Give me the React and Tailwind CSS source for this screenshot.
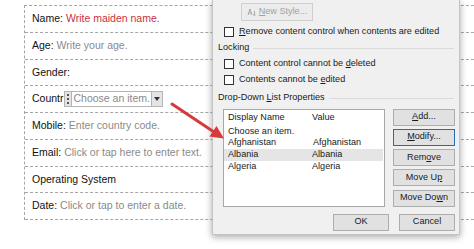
const rows = [
  { label: 'Name:', hint: 'Write maiden name.', red: true },
  { label: 'Age:', hint: 'Write your age.' },
  { label: 'Gender:', hint: '' },
  { label: 'Countr', combo: true },
  { label: 'Mobile:', hint: 'Enter country code.' },
  { label: 'Email:', hint: 'Click or tap here to enter text.' },
  { label: 'Operating System', hint: '' },
  { label: 'Date:', hint: 'Click or tap to enter a date.' },
]

const items = [
  { name: 'Choose an item.', value: '' },
  { name: 'Afghanistan', value: 'Afghanistan', shift: true },
  { name: 'Albania', value: 'Albania', selected: true },
  { name: 'Algeria', value: 'Algeria' },
]

function Check({ children }) {
  return (
    <div className="flex items-center h-[15.5px] pl-[6px] gap-[5px]">
      <span className="w-[10px] h-[10px] shrink-0 bg-white border border-[#333]" />
      <span>{children}</span>
    </div>
  )
}

function Group({ title }) {
  return (
    <div className="flex items-center gap-[4px] h-[17px]">
      <span>{title}</span>
      <span className="flex-1 h-px bg-[#dadada] mr-[5px]" />
    </div>
  )
}

function Btn({ children, focus, w = 'w-[62px]' }) {
  return (
    <div
      className={`${w} h-[17px] flex items-center justify-center bg-[#e1e1e1] border ${
        focus ? 'border-[#2b67b8]' : 'border-[#adadad]'
      }`}
    >
      {children}
    </div>
  )
}

export default function App() {
  return (
    <div
      className="relative w-[474px] h-[249px] overflow-hidden bg-white whitespace-nowrap"
      style={{ fontFamily: '"Liberation Sans", Arial, sans-serif' }}
    >
      {/* document table */}
      <div className="pt-[5px] pl-[24px]">
        <div className="w-[480px] border-t border-l border-dashed border-[#a5a5a5] text-[10.5px] text-[#111]">
          {rows.map((r) => (
            <div key={r.label} className="h-[26.75px] flex items-center pl-[7px] border-b border-dashed border-[#a5a5a5]">
              <span>{r.label}</span>
              {r.combo ? (
                <div className="flex items-center h-[16px]">
                  <span className="w-[8px] h-[16px] bg-[#e4e4e4] border border-[#b5b5b5] flex flex-col items-center justify-center gap-[2px]">
                    <span className="w-[2px] h-[2px] bg-[#555]" />
                    <span className="w-[2px] h-[2px] bg-[#555]" />
                    <span className="w-[2px] h-[2px] bg-[#555]" />
                  </span>
                  <span className="h-[16px] w-[79px] border-y border-[#b5b5b5] flex items-center pl-[2px] text-[#8a8a8a]">
                    Choose an item.
                  </span>
                  <span className="w-[12px] h-[16px] bg-[#e4e4e4] border border-[#b5b5b5] flex items-center justify-center">
                    <svg width="6" height="4" viewBox="0 0 6 4"><path d="M0 0h6L3 4z" fill="#333" /></svg>
                  </span>
                </div>
              ) : (
                r.hint && (
                  <span className={`ml-[3px] ${r.red ? 'text-[#c8333b]' : 'text-[#8a8a8a]'}`}>{r.hint}</span>
                )
              )}
            </div>
          ))}
        </div>
      </div>

      {/* dialog */}
      <div className="absolute left-[212px] top-0 w-[248px] h-[235px] bg-[#f0f0f0] border-x border-b border-[#c4c4c4] shadow-[0_2px_7px_rgba(0,0,0,0.35)] pl-[5px] pt-[3px] text-[9.1px] text-[#1a1a1a]">
        <div className="pl-[23px] h-[18px]">
          <div className="w-[72px] h-[18px] border border-[#cfcfcf] bg-[#ececec] flex items-center justify-center gap-[3px] text-[#a2a2a2]">
            <svg width="9" height="8" viewBox="0 0 9 8" fill="none" stroke="#a8a8a8" strokeWidth="1">
              <path d="M1 7L3 1l2 6M1.8 5h2.6M6 7h2.5M7.5 3v4" />
            </svg>
            <span><u>N</u>ew Style...</span>
          </div>
        </div>
        <div className="h-[3px]" />
        <Check>
          <u>R</u>emove content control when contents are edited
        </Check>
        <Group title="Locking" />
        <Check>
          Content control cannot be <u>d</u>eleted
        </Check>
        <Check>
          Contents cannot be <u>e</u>dited
        </Check>
        <div className="h-[2px]" />
        <Group title={<>Drop-Down <u>L</u>ist Properties</>} />
        <div className="h-[2px]" />
        <div className="flex pl-[5px] gap-[8px]">
          <div className="w-[162px] h-[98px] bg-white border border-[#a8a8a8]">
            <div className="flex h-[16px] items-center pl-[4px]">
              <span className="w-[84px]">Display Name</span>
              <span>Value</span>
            </div>
            {items.map((it) => (
              <div
                key={it.name}
                className={`flex h-[11.7px] items-center pl-[4px] mr-[1px] ${it.selected ? 'bg-[#e5e5e5]' : ''}`}
              >
                <span className="w-[84px]">{it.name}</span>
                <span className={it.shift ? 'pl-[1px]' : ''}>{it.value}</span>
              </div>
            ))}
          </div>
          <div className="flex flex-col gap-[3.3px]">
            <Btn><span><u>A</u>dd...</span></Btn>
            <Btn focus><span><u>M</u>odify...</span></Btn>
            <Btn><span>Rem<u>o</u>ve</span></Btn>
            <Btn><span>Move U<u>p</u></span></Btn>
            <Btn><span>Move Do<u>w</u>n</span></Btn>
          </div>
        </div>
        <div className="flex justify-end gap-[10px] pr-[4px] mt-[7px]">
          <Btn w="w-[56px]">OK</Btn>
          <Btn w="w-[56px]">Cancel</Btn>
        </div>
      </div>

      {/* red arrow */}
      <svg className="absolute left-0 top-0" width="474" height="249" viewBox="0 0 474 249">
        <line x1="172" y1="104" x2="214" y2="132" stroke="#d63a3c" strokeWidth="3" strokeLinecap="round" />
        <path d="M224 138.5L209.5 136.5L216.5 126z" fill="#d63a3c" />
      </svg>
    </div>
  )
}
